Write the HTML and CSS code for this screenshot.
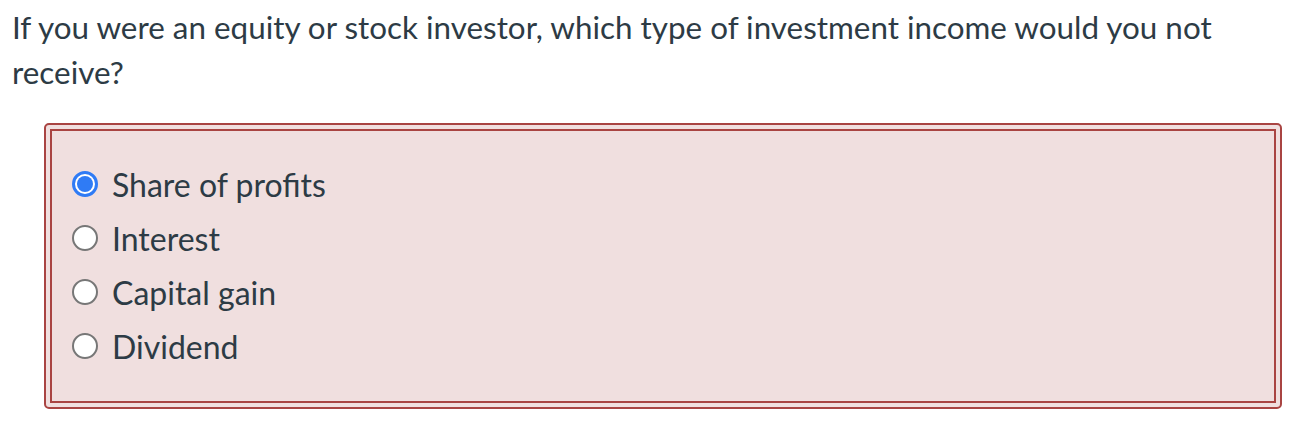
FILE: index.html
```html
<!DOCTYPE html>
<html>
<head>
<meta charset="utf-8">
<link rel="stylesheet" href="styles.css">
</head>
<body>
<div class="question">
  <p class="question-text">If you were an equity or stock investor, which type of investment income would you not receive?</p>
  <div class="answers-outer">
    <div class="answers">
      <label class="answer"><span class="radio checked"></span><span class="answer-text">Share of profits</span></label>
      <label class="answer"><span class="radio"></span><span class="answer-text">Interest</span></label>
      <label class="answer"><span class="radio"></span><span class="answer-text">Capital gain</span></label>
      <label class="answer"><span class="radio"></span><span class="answer-text">Dividend</span></label>
    </div>
  </div>
</div>
</body>
</html>
```

FILE: styles.css
```css
html, body {
  margin: 0;
  padding: 0;
  background: #ffffff;
}
body {
  font-family: Lato, "Liberation Sans", sans-serif;
  color: #2d3b45;
}
.question {
  padding: 0 18px 0 12px;
}
.question-text {
  margin: 0;
  padding-top: 5px;
  font-size: 31.4px;
  line-height: 45px;
}
.answers-outer {
  margin: 28px 0 0 32px;
  border: 2px solid #a94442;
  border-radius: 5px;
  padding: 4px;
  background: #f0dfdf;
}
.answers {
  border: 2px solid #a94442;
  padding: 26px 0 28px 20px;
  display: flex;
  flex-direction: column;
}
.answer {
  display: flex;
  align-items: center;
  height: 54px;
  font-size: 32px;
}
.radio {
  width: 22px;
  height: 22px;
  border: 2px solid #777;
  border-radius: 50%;
  background: #fff;
  margin-right: 14px;
  flex: none;
  position: relative;
}
.radio.checked {
  border: 3px solid #2f7bf5;
  width: 20px;
  height: 20px;
}
.radio.checked::after {
  content: "";
  position: absolute;
  left: 2px;
  top: 2px;
  width: 16px;
  height: 16px;
  border-radius: 50%;
  background: #2f7bf5;
}
```
